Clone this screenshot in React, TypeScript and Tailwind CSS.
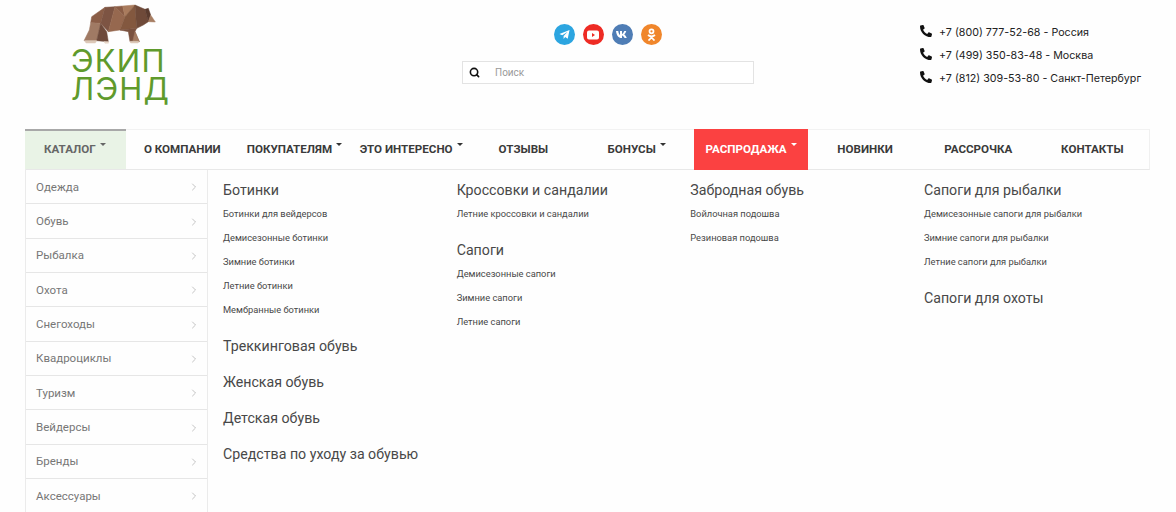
import React from "react";
import { Search, ChevronRight } from "lucide-react";
import { FaPhone } from "react-icons/fa";

const sidebarItems = ["Одежда", "Обувь", "Рыбалка", "Охота", "Снегоходы", "Квадроциклы", "Туризм", "Вейдерсы", "Бренды", "Аксессуары"];

const phones = [
  ["+7 (800) 777-52-68", "Россия"],
  ["+7 (499) 350-83-48", "Москва"],
  ["+7 (812) 309-53-80", "Санкт-Петербург"],
];

const navItems = [
  { label: "О КОМПАНИИ", w: "w-[103px]" },
  { label: "ПОКУПАТЕЛЯМ", w: "w-[113px]", caret: true },
  { label: "ЭТО ИНТЕРЕСНО", w: "w-[139px]", caret: true },
  { label: "ОТЗЫВЫ", w: "w-[108px]" },
  { label: "БОНУСЫ", w: "w-[87px]", caret: true },
];

const navRight = [
  { label: "НОВИНКИ", w: "w-[107px]" },
  { label: "РАССРОЧКА", w: "w-[117px]" },
  { label: "КОНТАКТЫ", w: "w-[88px]" },
];

const columns = [
  [
    { title: "Ботинки", links: ["Ботинки для вейдерсов", "Демисезонные ботинки", "Зимние ботинки", "Летние ботинки", "Мембранные ботинки"] },
    { title: "Треккинговая обувь", links: [] },
    { title: "Женская обувь", links: [] },
    { title: "Детская обувь", links: [] },
    { title: "Средства по уходу за обувью", links: [] },
  ],
  [
    { title: "Кроссовки и сандалии", links: ["Летние кроссовки и сандалии"] },
    { title: "Сапоги", links: ["Демисезонные сапоги", "Зимние сапоги", "Летние сапоги"] },
  ],
  [{ title: "Забродная обувь", links: ["Войлочная подошва", "Резиновая подошва"] }],
  [
    { title: "Сапоги для рыбалки", links: ["Демисезонные сапоги для рыбалки", "Зимние сапоги для рыбалки", "Летние сапоги для рыбалки"] },
    { title: "Сапоги для охоты", links: [] },
  ],
];

function Caret({ color = "border-t-[#333]" }: { color?: string }) {
  return <span className={`ml-[4px] mb-[11px] inline-block h-0 w-0 border-x-[3.5px] border-t-[3px] border-x-transparent ${color}`} />;
}

const bearFacets: [string, string][] = [
  ["35,50 75,22 62,70 32,68", "#8a5d47"],
  ["32,68 62,70 50,122 12,122 28,90", "#a07a64"],
  ["62,70 80,95 85,125 50,122", "#6e4a3b"],
  ["75,22 105,20 85,95 62,70", "#7d5443"],
  ["105,20 135,50 120,90 85,95", "#96684f"],
  ["105,20 128,18 135,50", "#8a5c45"],
  ["128,18 165,15 135,50", "#a97b5d"],
  ["135,50 165,15 170,85 120,90", "#83583f"],
  ["165,15 195,28 205,65 190,75 170,85", "#6f4a39"],
  ["195,28 205,25 212,45 205,65", "#5a3b2e"],
  ["205,65 212,45 226,66", "#a67d62"],
  ["120,90 145,95 150,125 178,125 165,95 170,85", "#7a513f"],
  ["165,95 178,125 158,125", "#a47b62"],
  ["14,122 50,122 46,129 18,129", "#dcc8b8"],
  ["72,125 86,125 85,130 75,130", "#e6d6c8"],
  ["150,124 176,124 174,129 152,129", "#dcc8b8"],
];

function BearLogo() {
  // drawn on a 3x grid of the logo area
  return (
    <svg width="84" height="50" viewBox="0 0 252 150" className="block">
      {bearFacets.map(([points, fill]) => (
        <polygon key={points} points={points} fill={fill} stroke={fill} strokeWidth="1.500" />
      ))}
    </svg>
  );
}

function Social({ bg, children }: { bg: string; children: React.ReactNode }) {
  return <span className={`flex h-[21px] w-[21px] items-center justify-center rounded-full ${bg}`}>{children}</span>;
}

export default function App() {
  return (
    <div className="h-[512px] w-[1176px] overflow-hidden bg-[#fefefe] font-['Roboto',sans-serif]">
      {/* Header */}
      <header className="flex h-[129px]">
        <div className="w-[462px] pl-[71px]">
          <div className="pl-[9px]"><BearLogo /></div>
          <div className="-mt-[3px] font-['Inter',sans-serif] text-[31px] leading-[28px] font-normal tracking-[1.2px] text-[#5f9a2c]">
            <div>ЭКИП</div>
            <div>ЛЭНД</div>
          </div>
        </div>
        <div className="w-[292px] pt-[24px]">
          <div className="flex justify-center gap-[8px] pr-[1px]">
            <Social bg="bg-[#2ca5e0]">
              <svg width="11" height="11" viewBox="0 0 24 24" fill="white"><path d="M23 2 1 11l6 2.500L19 6 10 15v7l3.500-4.500L19 21z" /></svg>
            </Social>
            <Social bg="bg-[#ee2b24]">
              <svg width="12" height="10" viewBox="0 0 24 20" fill="white"><path d="M4 1h16a4 4 0 0 1 4 4v10a4 4 0 0 1-4 4H4a4 4 0 0 1-4-4V5a4 4 0 0 1 4-4zm6 5v8l6-4z" fillRule="evenodd" /></svg>
            </Social>
            <Social bg="bg-[#4f7db5]">
              <svg width="13" height="9" viewBox="0 0 26 16" fill="white"><path d="M0 1h4.500c.5 4 2 7 3.500 8V1h4v6c1.500-.5 3.500-3 4.500-6h4c-.7 3-2.500 5.500-4 7 1.600 1 3.800 3.500 5 7h-4.500c-1-2.500-3-4.500-5-5v5h-1C5 15 1 10 0 1z" /></svg>
            </Social>
            <Social bg="bg-[#f0862b]">
              <svg width="9" height="13" viewBox="0 0 18 26" fill="none" stroke="white" strokeWidth="3.500"><circle cx="9" cy="6.500" r="4" /><path d="M2 14c4 3 10 3 14 0M9 17v2M3 25l6-6 6 6" /></svg>
            </Social>
          </div>
          <div className="mt-[16px] flex h-[23px] items-center border border-[#e3e3e3] bg-white">
            <Search size={11} strokeWidth={3.5} className="ml-[6px] text-[#111]" />
            <span className="ml-[15px] text-[10px] text-[#9a9a9a]">Поиск</span>
          </div>
        </div>
        <div className="pl-[166px] pt-[22px] font-['Inter',sans-serif] text-[10.7px] text-[#222]">
          {phones.map(([num, city]) => (
            <div key={num} className="flex h-[23px] items-center">
              <FaPhone size={12} className="mr-[7px] mb-[5px] -scale-x-100 text-[#111]" />
              <span className="whitespace-pre">{num} - {city}</span>
            </div>
          ))}
        </div>
      </header>

      {/* Main nav */}
      <nav className="ml-[25px] flex h-[41px] w-[1125px] border border-t-[#f2f2f2] border-x-[#f0f0f0] border-b-[#e8e8e8] text-[11.6px] font-bold text-[#3a3a3a]">
        <div className="-mt-px -ml-px mr-[18px] flex w-[101px] items-center border-t-2 border-t-[#a8a8a8] bg-[#e9f3e6] pl-[19px] text-[#666]">
          КАТАЛОГ<Caret color="border-t-[#666]" />
        </div>
        {navItems.map((item) => (
          <div key={item.label} className={`flex items-center whitespace-nowrap ${item.label === "ОТЗЫВЫ" ? "w-[109px]" : item.w}`}>
            {item.label}
            {item.caret && <Caret />}
          </div>
        ))}
        <div className="-my-px mr-[29px] flex w-[114px] items-center bg-[#fb4141] pl-[11px] text-white">
          РАСПРОДАЖА<Caret color="border-t-white" />
        </div>
        {navRight.map((item) => (
          <div key={item.label} className={`flex items-center whitespace-nowrap ${item.w}`}>
            {item.label}
          </div>
        ))}
      </nav>

      {/* Catalog */}
      <div className="ml-[25px] flex w-[1125px]">
        <aside className="w-[183px] shrink-0 border-x border-[#ebebeb]">
          {sidebarItems.map((name) => (
            <div key={name} className="flex h-[34.35px] items-center justify-between border-b border-[#e6e6e6] pt-px pr-[7px] pl-[10px] text-[11.5px] text-[#777]">
              {name}
              <ChevronRight size={12} strokeWidth={1} className="text-[#888]" />
            </div>
          ))}
        </aside>
        <div className="grid grid-cols-[repeat(4,233.67px)] pl-[15px] pt-[11px]">
          {columns.map((col) => (
            <div key={col[0].title}>
              {col.map((group) => (
                <div key={group.title} className="mb-[18px]">
                  <div className="text-[14.2px] leading-[18px] text-[#484848]">{group.title}</div>
                  {group.links.map((link) => (
                    <div key={link} className="mt-[6px] h-[18px] text-[9.3px] leading-[18px] text-[#484848]">{link}</div>
                  ))}
                </div>
              ))}
            </div>
          ))}
        </div>
      </div>
    </div>
  );
}
